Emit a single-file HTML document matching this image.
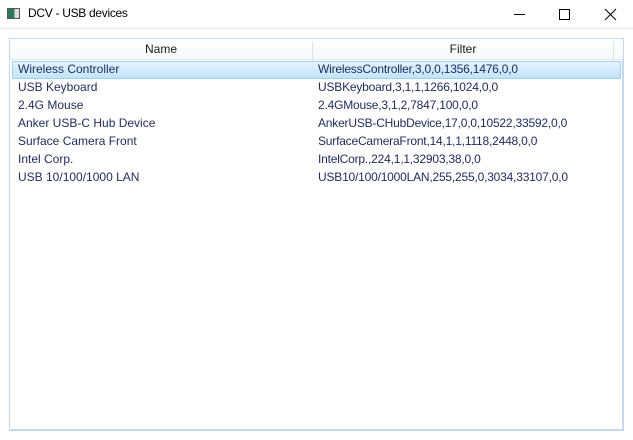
<!DOCTYPE html>
<html><head><meta charset="utf-8"><style>
*{margin:0;padding:0;box-sizing:border-box}
body{width:633px;height:440px;background:#fff;position:relative;overflow:hidden;font-family:"Liberation Sans",sans-serif;font-size:12px;color:#1e2b5c}
.title{position:absolute;left:0;top:0;width:633px;height:29px;border-bottom:1px solid #e5e5e5;background:#fff}
.title .t{position:absolute;left:28px;top:6px;font-size:12px;color:#000;letter-spacing:-0.3px}
.ico{position:absolute;left:7px;top:8px;width:13px;height:11px;border:1px solid #555;background:linear-gradient(90deg,#2a7a5a 0 60%,#ddd 60%)}
.box{position:absolute;left:9px;top:38px;width:615px;height:393px;border:1px solid #c5d9ea;border-bottom:2px solid #c5d9ea;border-right:2px solid #c5d9ea}
.hdr{position:absolute;left:0;top:0;width:613px;height:21px;border-bottom:1px solid #e3e8ee;background:linear-gradient(#fff,#f7f8fa)}
.hdr div{position:absolute;top:3px;color:#1a1a1a;font-size:12px;text-align:center}
.sep{position:absolute;top:0;width:1px;height:21px;background:#dde2e7}
.row{position:absolute;left:2px;width:609px;height:18px}
.row span{position:absolute;top:1px}
.row span+span{letter-spacing:-0.2px}
.sel{background:linear-gradient(#e3f2fe,#c3e4fc);border:1px solid #9fd0f3;border-radius:2px}
</style></head><body>
<div class="title"><div class="ico"></div><div class="t">DCV - USB devices</div>
<svg style="position:absolute;left:510px;top:8px" width="115" height="14"><line x1="4" y1="6.5" x2="15" y2="6.5" stroke="#000"/><rect x="49.5" y="1.5" width="10" height="10" fill="none" stroke="#000"/><path d="M95 1L106 12M106 1L95 12" stroke="#000"/></svg>
</div>
<div class="box">
<div class="hdr"><div style="left:0;width:302px">Name</div><div class="sep" style="left:302px"></div><div style="left:303px;width:300px">Filter</div><div class="sep" style="left:603px"></div></div>
<div class="row sel" style="top:22px"><span style="left:5px;top:0">Wireless Controller</span><span style="left:305px;top:0">WirelessController,3,0,0,1356,1476,0,0</span></div>
<div class="row" style="top:40px"><span style="left:6px">USB Keyboard</span><span style="left:306px">USBKeyboard,3,1,1,1266,1024,0,0</span></div>
<div class="row" style="top:58px"><span style="left:6px">2.4G Mouse</span><span style="left:306px">2.4GMouse,3,1,2,7847,100,0,0</span></div>
<div class="row" style="top:76px"><span style="left:6px">Anker USB-C Hub Device</span><span style="left:306px">AnkerUSB-CHubDevice,17,0,0,10522,33592,0,0</span></div>
<div class="row" style="top:94px"><span style="left:6px">Surface Camera Front</span><span style="left:306px">SurfaceCameraFront,14,1,1,1118,2448,0,0</span></div>
<div class="row" style="top:112px"><span style="left:6px">Intel Corp.</span><span style="left:306px">IntelCorp.,224,1,1,32903,38,0,0</span></div>
<div class="row" style="top:130px"><span style="left:6px">USB 10/100/1000 LAN</span><span style="left:306px">USB10/100/1000LAN,255,255,0,3034,33107,0,0</span></div>
</div>
</body></html>
